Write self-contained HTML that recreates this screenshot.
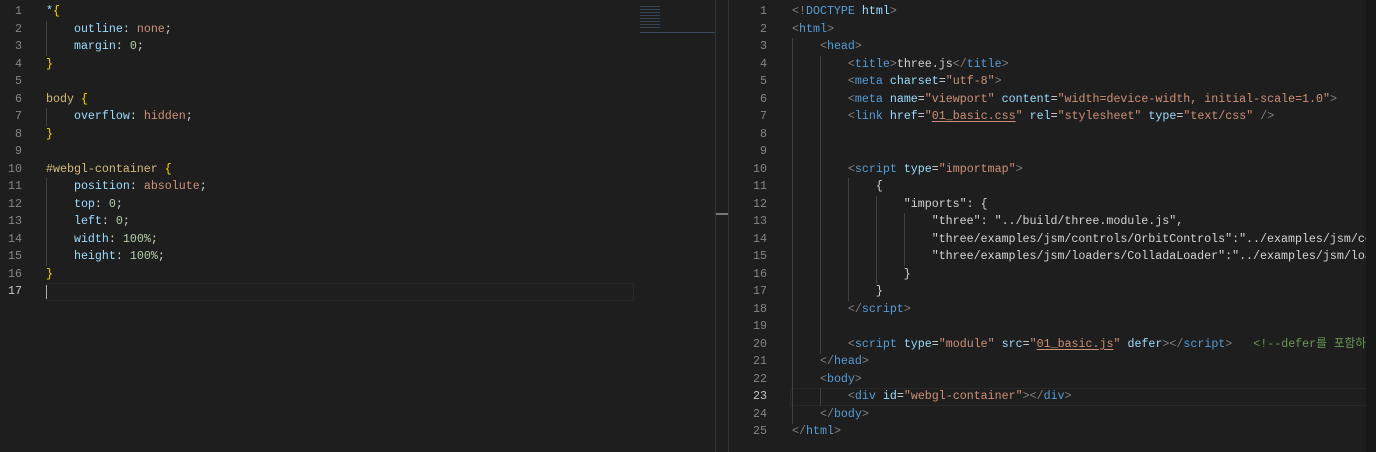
<!DOCTYPE html>
<html><head><meta charset="utf-8"><style>
body{margin:0;width:1376px;height:452px;background:#1e1e1e;overflow:hidden;position:relative;font-family:"Liberation Mono","Noto Sans CJK KR",monospace;font-size:11.65px;}
.l{position:absolute;height:17.5px;line-height:17.5px;white-space:pre;color:#d4d4d4}
.n{position:absolute;height:17.5px;line-height:17.5px;text-align:right;color:#858585;width:30px}
.s{color:#d7ba7d}.b{color:#ffd700}.p{color:#9cdcfe}.v{color:#ce9178}.num{color:#b5cea8}.t{color:#569cd6}.g{color:#808080}.c{color:#6a9955}.u{text-decoration:underline;text-decoration-color:#ce9178;text-underline-offset:2px}
.guide{position:absolute;width:1px;background:#404040}
</style></head><body>
<div style="position:absolute;left:46px;top:283px;width:586px;height:16px;border:1px solid #282828"></div>
<div style="position:absolute;left:46px;top:285px;width:1px;height:14px;background:#aeafad"></div>
<div class="guide" style="left:46px;top:21px;height:35px"></div>
<div class="guide" style="left:46px;top:108px;height:18px"></div>
<div class="guide" style="left:46px;top:178px;height:88px"></div>
<div id="L"></div>
<div style="position:absolute;left:640px;top:4px;width:20px;height:26px;opacity:.5;background:repeating-linear-gradient(#1e1e1e 0 2px,#4a6a8a 2px 3px)"></div>
<div style="position:absolute;left:640px;top:32px;width:76px;height:1px;background:#3a4a5a"></div>
<div style="position:absolute;left:715px;top:0;width:1px;height:452px;background:#333"></div>
<div style="position:absolute;left:728px;top:0;width:1px;height:452px;background:#333"></div>
<div style="position:absolute;left:716px;top:213px;width:12px;height:2px;background:#777"></div>
<div style="position:absolute;left:790px;top:388px;width:586px;height:16px;border:1px solid #282828"></div>
<div class="guide" style="left:792px;top:38px;height:386px"></div>
<div class="guide" style="left:820px;top:56px;height:298px"></div>
<div class="guide" style="left:820px;top:388px;height:18px"></div>
<div class="guide" style="left:848px;top:178px;height:123px"></div>
<div class="guide" style="left:876px;top:196px;height:88px"></div>
<div class="guide" style="left:904px;top:213px;height:53px"></div>
<div style="position:absolute;left:1366px;top:0;width:10px;height:452px;background:#181818"></div>
<div id="R"></div>
<script>
const L=[
'<span class="p">*</span><span class="b">{</span>',
'    <span class="p">outline</span>: <span class="v">none</span>;',
'    <span class="p">margin</span>: <span class="num">0</span>;',
'<span class="b">}</span>','',
'<span class="s">body</span> <span class="b">{</span>',
'    <span class="p">overflow</span>: <span class="v">hidden</span>;',
'<span class="b">}</span>','',
'<span class="s">#webgl-container</span> <span class="b">{</span>',
'    <span class="p">position</span>: <span class="v">absolute</span>;',
'    <span class="p">top</span>: <span class="num">0</span>;',
'    <span class="p">left</span>: <span class="num">0</span>;',
'    <span class="p">width</span>: <span class="num">100%</span>;',
'    <span class="p">height</span>: <span class="num">100%</span>;',
'<span class="b">}</span>',''];
const R=[
'<span class="g">&lt;!</span><span class="t">DOCTYPE</span> <span class="p">html</span><span class="g">&gt;</span>',
'<span class="g">&lt;</span><span class="t">html</span><span class="g">&gt;</span>',
'    <span class="g">&lt;</span><span class="t">head</span><span class="g">&gt;</span>',
'        <span class="g">&lt;</span><span class="t">title</span><span class="g">&gt;</span>three.js<span class="g">&lt;/</span><span class="t">title</span><span class="g">&gt;</span>',
'        <span class="g">&lt;</span><span class="t">meta</span> <span class="p">charset</span>=<span class="v">"utf-8"</span><span class="g">&gt;</span>',
'        <span class="g">&lt;</span><span class="t">meta</span> <span class="p">name</span>=<span class="v">"viewport"</span> <span class="p">content</span>=<span class="v">"width=device-width, initial-scale=1.0"</span><span class="g">&gt;</span>',
'        <span class="g">&lt;</span><span class="t">link</span> <span class="p">href</span>=<span class="v">"<span class="u">01_basic.css</span>"</span> <span class="p">rel</span>=<span class="v">"stylesheet"</span> <span class="p">type</span>=<span class="v">"text/css"</span> <span class="g">/&gt;</span>',
'','',
'        <span class="g">&lt;</span><span class="t">script</span> <span class="p">type</span>=<span class="v">"importmap"</span><span class="g">&gt;</span>',
'            {',
'                "imports": {',
'                    "three": "../build/three.module.js",',
'                    "three/examples/jsm/controls/OrbitControls":"../examples/jsm/controls/OrbitControls.js",',
'                    "three/examples/jsm/loaders/ColladaLoader":"../examples/jsm/loaders/ColladaLoader.js"',
'                }',
'            }',
'        <span class="g">&lt;/</span><span class="t">script</span><span class="g">&gt;</span>',
'',
'        <span class="g">&lt;</span><span class="t">script</span> <span class="p">type</span>=<span class="v">"module"</span> <span class="p">src</span>=<span class="v">"<span class="u">01_basic.js</span>"</span> <span class="p">defer</span><span class="g">&gt;&lt;/</span><span class="t">script</span><span class="g">&gt;</span>   <span class="c">&lt;!--defer를 포함하면</span>',
'    <span class="g">&lt;/</span><span class="t">head</span><span class="g">&gt;</span>',
'    <span class="g">&lt;</span><span class="t">body</span><span class="g">&gt;</span>',
'        <span class="g">&lt;</span><span class="t">div</span> <span class="p">id</span>=<span class="v">"webgl-container"</span><span class="g">&gt;&lt;/</span><span class="t">div</span><span class="g">&gt;</span>',
'    <span class="g">&lt;/</span><span class="t">body</span><span class="g">&gt;</span>',
'<span class="g">&lt;/</span><span class="t">html</span><span class="g">&gt;</span>'];
let h='';
L.forEach((s,i)=>{const y=3.25+i*17.5;h+=`<div class="n" style="left:-8px;top:${y}px;${i==16?'color:#c6c6c6':''}">${i+1}</div><div class="l" style="left:46px;top:${y}px">${s}</div>`;});
document.getElementById('L').innerHTML=h;h='';
R.forEach((s,i)=>{const y=3.25+i*17.5;h+=`<div class="n" style="left:737px;top:${y}px;${i==22?'color:#c6c6c6':''}">${i+1}</div><div class="l" style="left:792px;top:${y}px;width:574px;overflow:hidden">${s}</div>`;});
document.getElementById('R').innerHTML=h;
</script>
</body></html>
